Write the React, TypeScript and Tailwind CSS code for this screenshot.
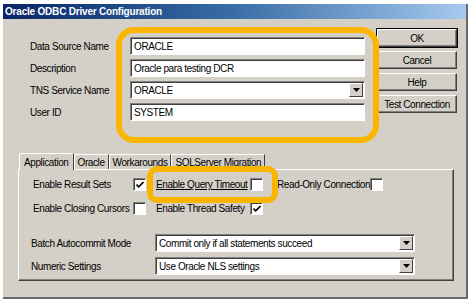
import React from 'react';

const font = { fontFamily: '"Liberation Sans", Arial, sans-serif' };

function Field({ value, select }: { value: string; select?: boolean }) {
  return (
    <div className="flex items-center h-[18px] bg-white border border-t-[#808080] border-l-[#808080] border-b-white border-r-white shadow-[inset_1px_1px_0_#404040] pl-[3px] pr-[1px] text-[10px] text-black">
      <span className="flex-1 truncate">{value}</span>
      {select && <DropButton />}
    </div>
  );
}

function DropButton() {
  return (
    <div className="w-[14px] h-[14px] bg-[#d4d0c8] border border-t-white border-l-white border-b-[#404040] border-r-[#404040] flex items-center justify-center">
      <svg width="7" height="4" viewBox="0 0 7 4">
        <path d="M0 0h7L3.5 4z" fill="#000" />
      </svg>
    </div>
  );
}

function Button({ label, isDefault }: { label: string; isDefault?: boolean }) {
  return (
    <div
      className={`h-[18px] flex items-center justify-center bg-[#d4d0c8] text-[10px] text-black whitespace-nowrap border border-t-white border-l-white border-b-[#404040] border-r-[#404040] shadow-[inset_-1px_-1px_0_#808080] ${
        isDefault ? 'outline outline-1 outline-black' : ''
      }`}
    >
      {label}
    </div>
  );
}

function Check({ checked }: { checked?: boolean }) {
  return (
    <div className="shrink-0 w-[13px] h-[13px] bg-white border border-t-[#808080] border-l-[#808080] border-b-white border-r-white shadow-[inset_1px_1px_0_#404040] flex items-center justify-center">
      {checked && (
        <svg width="8" height="8" viewBox="0 0 8 8">
          <path d="M0.5 3.5l2.2 2.3L7.5 1" stroke="#000" strokeWidth="1.6" fill="none" />
        </svg>
      )}
    </div>
  );
}

export default function App() {
  const tabs = ['Application', 'Oracle', 'Workarounds', 'SQLServer Migration'];
  return (
    <div
      className="relative w-[474px] h-[305px] bg-white pt-[4px] pl-[3px] text-black tracking-[-0.4px] whitespace-nowrap"
      style={font}
    >
      <div className="w-[465px] h-[295px] bg-[#d4d0c8] border-r-2 border-b-2 border-[#6a6a6a] flex flex-col">
        {/* Title bar */}
        <div className="h-[15px] bg-gradient-to-r from-[#0a246a] via-[#3a6ea5] to-[#a6caf0] flex items-center pl-[2px] text-[10px] font-bold text-white tracking-[-0.2px]">
          Oracle ODBC Driver Configuration
        </div>

        {/* Top section */}
        <div className="flex pt-[18px]">
          <div className="flex flex-col gap-[4px] pl-[27px]">
            {[
              ['Data Source Name', 'ORACLE', false],
              ['Description', 'Oracle para testing DCR', false],
              ['TNS Service Name', 'ORACLE', true],
              ['User ID', 'SYSTEM', false],
            ].map(([label, value, select]) => (
              <div key={label as string} className="flex items-center">
                <div className="w-[100px] text-[10px]">{label}</div>
                <div className="w-[235px]">
                  <Field value={value as string} select={select as boolean} />
                </div>
              </div>
            ))}
          </div>
          <div className="flex flex-col gap-[4px] ml-[12px] mt-[-8px] w-[80px]">
            <Button label="OK" isDefault />
            <Button label="Cancel" />
            <Button label="Help" />
            <Button label="Test Connection" />
          </div>
        </div>

        {/* Tabs */}
        <div className="pl-[16px] mt-[31px] flex items-end h-[17px]">
          {tabs.map((t, i) => (
            <div
              key={t}
              className={`px-[3px] text-[10px] flex items-center border-l border-t border-t-white border-l-white border-r border-r-[#404040] rounded-tl-[2px] ${
                i === 0 ? 'h-[17px] relative top-[1px] bg-[#d4d0c8] z-10 px-[4px]' : 'h-[15px]'
              }`}
            >
              {t}
            </div>
          ))}
        </div>
        <div className="ml-[15px] w-[436px] h-[112px] border border-t-white border-l-white border-b-[#404040] border-r-[#404040] shadow-[inset_-1px_-1px_0_#808080] flex flex-col">
          <div className="flex items-center h-[13px] mt-[8px] text-[10px]">
            <div className="w-[114px] pl-[14px]">Enable Result Sets</div>
            <Check checked />
            <div className="w-[104px] pl-[10px]">
              <span className="underline">Enable Query Timeout</span>
            </div>
            <Check />
            <div className="w-[107px] pl-[14px]">Read-Only Connection</div>
            <Check />
          </div>
          <div className="flex items-center h-[13px] mt-[11px] text-[10px]">
            <div className="w-[114px] pl-[14px]">Enable Closing Cursors</div>
            <Check />
            <div className="w-[104px] pl-[10px]">Enable Thread Safety</div>
            <Check checked />
          </div>
          <div className="flex flex-col gap-[5px] mt-[19px] pl-[12px]">
            {[
              ['Batch Autocommit Mode', 'Commit only if all statements succeed'],
              ['Numeric Settings', 'Use Oracle NLS settings'],
            ].map(([l, v]) => (
              <div key={l} className="flex items-center text-[10px]">
                <div className="w-[124px]">{l}</div>
                <div className="w-[260px]">
                  <Field value={v} select />
                </div>
              </div>
            ))}
          </div>
        </div>
      </div>

      {/* Highlight overlays */}
      <div className="absolute left-[116px] top-[27px] w-[263px] h-[116px] rounded-[18px] border-[6px] border-[#f9b500] pointer-events-none" />
      <div className="absolute left-[147px] top-[166px] w-[131px] h-[37px] rounded-[10px] border-[6px] border-[#f9b500] pointer-events-none" />
    </div>
  );
}
